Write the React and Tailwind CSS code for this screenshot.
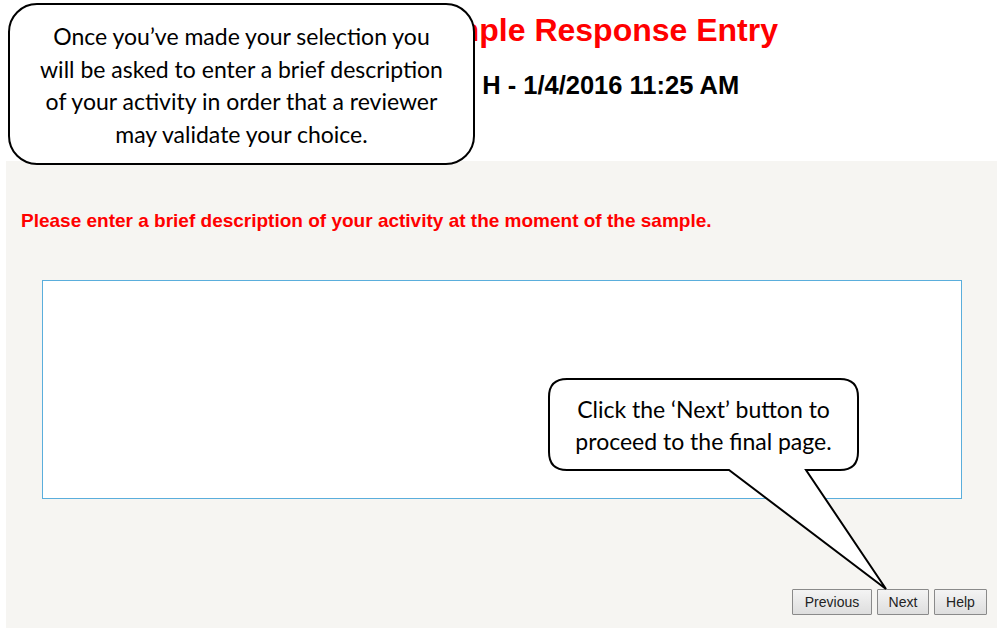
import React from 'react';

const Callouts = () => (
  <>
    <svg
      className="absolute left-0 top-0 pointer-events-none"
      width="1001"
      height="631"
      viewBox="0 0 1001 631"
    >
      <rect x="9" y="4" width="465" height="160" rx="28" ry="28" fill="#fff" stroke="#000" strokeWidth="2" />
      <path
        d="M567 379 H840 Q858 379 858 397 V452 Q858 470 840 470 H806 L886 589 L729 470 H567 Q549 470 549 452 V397 Q549 379 567 379 Z"
        fill="#fff"
        stroke="#000"
        strokeWidth="2"
        strokeLinejoin="miter"
      />
    </svg>

    <div className="absolute left-[9px] top-[5px] w-[465px] h-[160px] flex items-center justify-center text-center font-['Lato',sans-serif] text-[23px] leading-[32.5px] text-black">
      <p>
        Once you’ve made your selection you
        <br />
        will be asked to enter a brief description
        <br />
        of your activity in order that a reviewer
        <br />
        may validate your choice.
      </p>
    </div>

    <div className="absolute left-[549px] top-[379px] w-[309px] h-[91px] flex items-center justify-center text-center font-['Lato',sans-serif] text-[23px] leading-[32px] text-black">
      <p>
        Click the ‘Next’ button to
        <br />
        proceed to the final page.
      </p>
    </div>
  </>
);

const NavButton = ({ label, width }) => (
  <button
    className={`h-[26px] ${width} border border-[#8a8a8a] bg-gradient-to-b from-[#f4f4f4] to-[#dedede] text-[14px] leading-none text-[#222] rounded-[1px]`}
  >
    {label}
  </button>
);

const App = () => {
  return (
    <div className="relative w-[1001px] h-[631px] bg-white overflow-hidden font-['Liberation_Sans',Arial,sans-serif]">
      <header className="pt-[12px] text-center">
        <h1 className="pl-[9px] text-[32px] leading-[36px] font-bold text-[#ff0000]">
          Experience Sample Response Entry
        </h1>
        <h2 className="mt-[22px] pr-[4px] text-[25.5px] leading-[30px] font-bold text-black">
          Sample Group AB H - 1/4/2016 11:25 AM
        </h2>
      </header>

      <div className="mt-[61px] ml-[6px] mr-[4px] h-[467px] bg-[#f6f5f2] flex flex-col">
        <p className="mt-[49px] pl-[15px] text-[19px] leading-[22px] font-bold text-[#ff0000]">
          Please enter a brief description of your activity at the moment of the sample.
        </p>

        <textarea
          className="mt-[48px] ml-[36px] w-[920px] h-[219px] bg-white border border-[#5aaedc] resize-none outline-none"
        />

        <div className="mt-auto mb-[13px] mr-[10px] flex justify-end gap-[5px]">
          <NavButton label="Previous" width="w-[80px]" />
          <NavButton label="Next" width="w-[52px]" />
          <NavButton label="Help" width="w-[53px]" />
        </div>
      </div>

      <Callouts />
    </div>
  );
};

export default App;
